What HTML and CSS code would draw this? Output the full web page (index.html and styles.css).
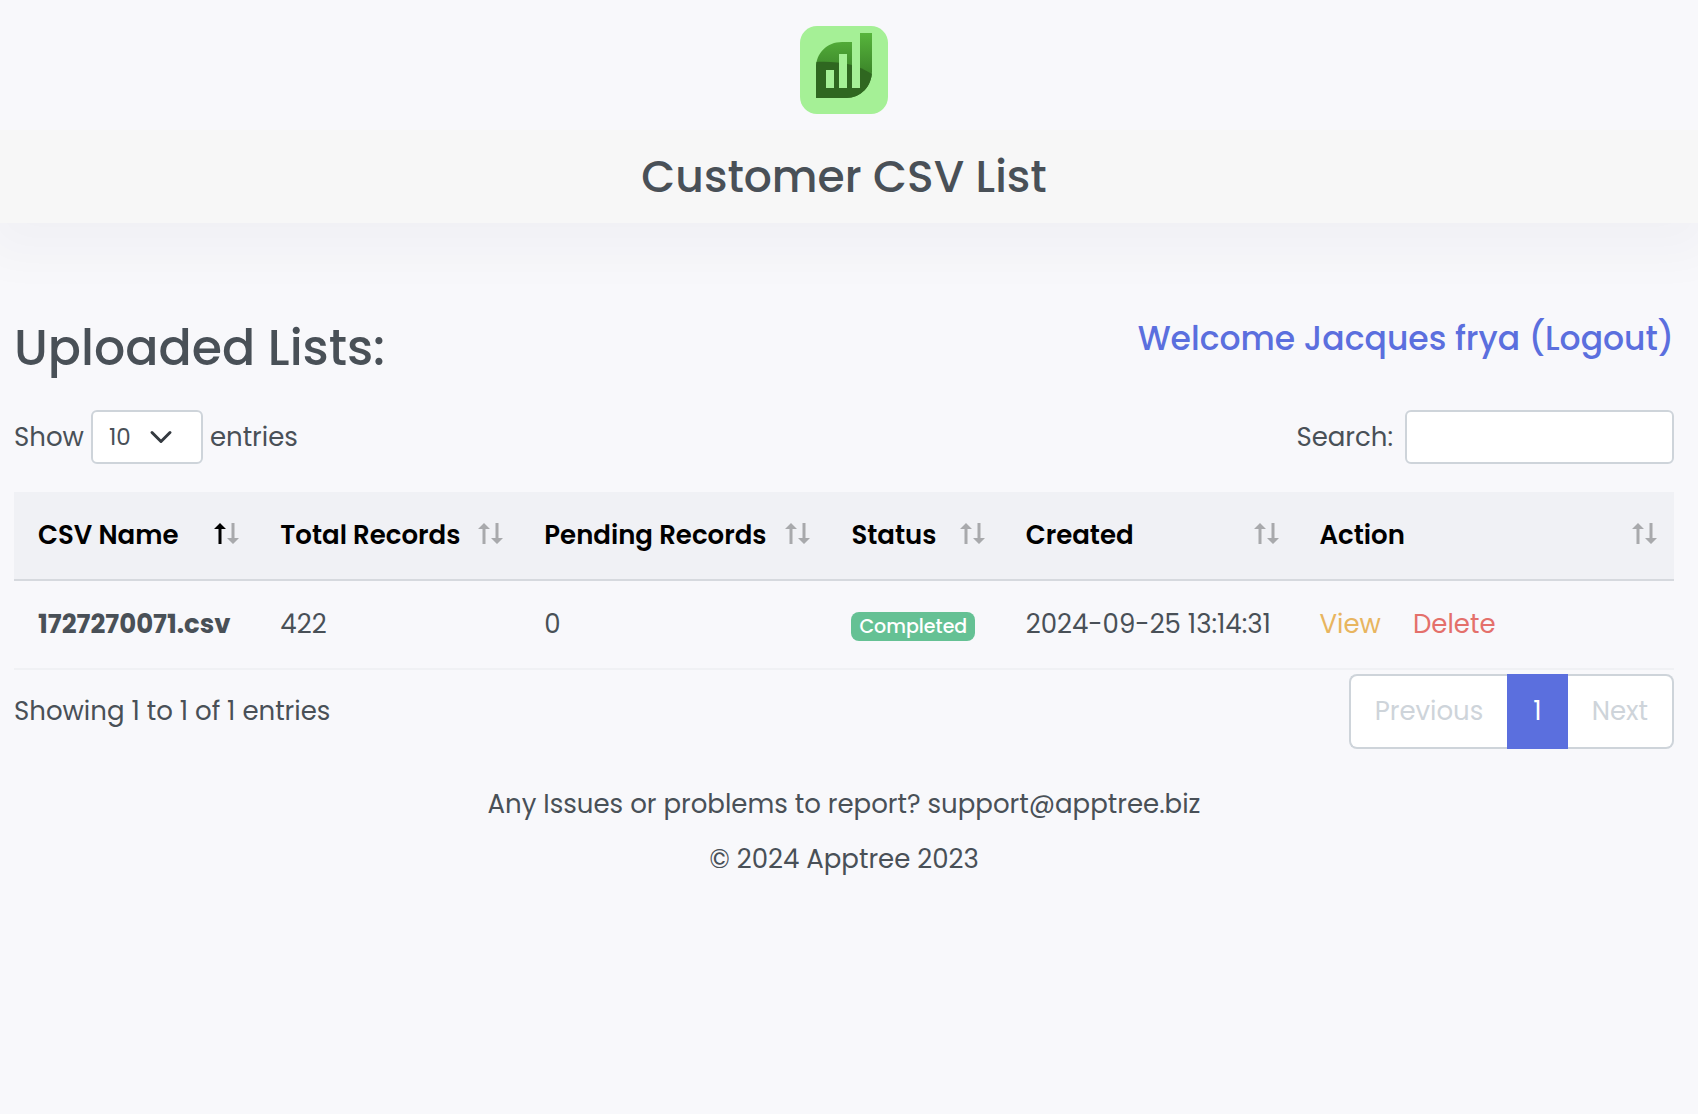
FILE: index.html
```html
<!DOCTYPE html>
<html lang="en">
<head>
  <meta charset="UTF-8">
  <meta name="viewport" content="width=device-width, initial-scale=1.0">
  <title>Customer CSV List</title>
  <link rel="stylesheet" href="styles.css">
</head>
<body>
  <svg class="sprite" aria-hidden="true">
    <symbol id="sort" viewBox="0 0 25 21">
      <path class="up" d="M4.500 21V6H0L6 0l6 6H7.500v15z"/>
      <path class="down" d="M17.500 0v15H13l6 6 6-6h-4.500V0z"/>
    </symbol>
  </svg>

  <header>
    <div class="logo">
      <svg width="88" height="88" viewBox="0 0 88 88" role="img" aria-label="Apptree">
        <defs>
          <linearGradient id="leaf" x1="0" y1="0" x2="0" y2="1">
            <stop offset="0" stop-color="#57b53c"/>
            <stop offset="0.7" stop-color="#387f27"/>
          </linearGradient>
          <clipPath id="shape">
            <path d="M16 72V42C16 27 27 16 42 16H52V62H60V7H72V45C72 60 61 72 46 72Z"/>
          </clipPath>
        </defs>
        <rect width="88" height="88" rx="17" fill="#a5f096"/>
        <g clip-path="url(#shape)">
          <rect x="16" y="7" width="56" height="65" fill="url(#leaf)"/>
          <path d="M16 36C38 35 56 38 72 48V72H16Z" fill="#2f6720"/>
        </g>
        <path d="M26 44h8v18h-8zM39 28h8v34h-8z" fill="#a5f096"/>
      </svg>
    </div>
    <h1>Customer CSV List</h1>
  </header>

  <main>
    <div class="row top">
      <h2>Uploaded Lists:</h2>
      <a class="logout" href="#">Welcome Jacques frya (Logout)</a>
    </div>

    <div class="row filters">
      <label class="length">Show
        <select>
          <option>10</option>
          <option>25</option>
          <option>50</option>
          <option>100</option>
        </select>
        entries
      </label>
      <label class="search">Search: <input type="search"></label>
    </div>

    <table>
      <colgroup>
        <col class="col-name">
        <col class="col-total">
        <col class="col-pending">
        <col class="col-status">
        <col class="col-created">
        <col class="col-action">
      </colgroup>
      <thead>
        <tr>
          <th class="asc"><button type="button">CSV Name <svg><use href="#sort"/></svg></button></th>
          <th><button type="button">Total Records <svg><use href="#sort"/></svg></button></th>
          <th><button type="button">Pending Records <svg><use href="#sort"/></svg></button></th>
          <th><button type="button">Status <svg><use href="#sort"/></svg></button></th>
          <th><button type="button">Created <svg><use href="#sort"/></svg></button></th>
          <th><button type="button">Action <svg><use href="#sort"/></svg></button></th>
        </tr>
      </thead>
      <tbody>
        <tr>
          <td><strong>1727270071.csv</strong></td>
          <td>422</td>
          <td>0</td>
          <td><span class="badge">Completed</span></td>
          <td>2024-09-25 13:14:31</td>
          <td><a class="view" href="#">View</a><a class="delete" href="#">Delete</a></td>
        </tr>
      </tbody>
    </table>

    <div class="row bottom">
      <div class="info">Showing 1 to 1 of 1 entries</div>
      <nav class="pagination">
        <button type="button" disabled>Previous</button>
        <button type="button" class="active">1</button>
        <button type="button" disabled>Next</button>
      </nav>
    </div>
  </main>

  <footer>
    <p>Any Issues or problems to report? support@apptree.biz</p>
    <p>© 2024 Apptree 2023</p>
  </footer>
</body>
</html>
```
FILE: styles.css
```css
* {
  box-sizing: border-box;
}
body {
  margin: 0;
  font-family: Poppins, Inter, sans-serif;
  font-size: 26px;
  line-height: 39px;
  color: #495057;
  background-color: #f8f8fb;
}
a {
  text-decoration: none;
}
button, select, input {
  font: inherit;
  color: inherit;
}
.sprite {
  display: block;
  width: 0;
  height: 0;
}

header {
  text-align: center;
  box-shadow: 0 16px 48px 16px rgba(18, 38, 63, 0.03);
  clip-path: inset(0 0 -100px 0);
}
.logo {
  display: flex;
  justify-content: center;
  padding: 26px 10px 16px 0;
  background-color: #f8f8fb;
}
h1 {
  margin: 0;
  padding: 20px 10px 19px 0;
  font-size: 44px;
  font-weight: 500;
  line-height: 54px;
  background-color: #f7f7f7;
}

main {
  padding: 0 24px 0 14px;
}
.row {
  display: flex;
  justify-content: space-between;
}
.top {
  padding-top: 94px;
}
h2 {
  margin: 0;
  font-size: 49px;
  font-weight: 500;
  line-height: 62px;
}
.logout {
  font-size: 33px;
  font-weight: 500;
  line-height: 44px;
  color: #5b6fde;
}
.filters {
  padding: 31px 0 28px;
}
.length, .search {
  display: flex;
  align-items: center;
  gap: 7px;
}
.search {
  gap: 12px;
}
select, input {
  height: 54px;
  border: 2px solid #ced4da;
  border-radius: 6px;
  background-color: #fff;
}
select {
  width: 112px;
  padding: 0 16px;
  font-size: 23px;
  appearance: none;
  background-image: url("data:image/svg+xml,%3Csvg xmlns='http://www.w3.org/2000/svg' viewBox='0 0 16 16'%3E%3Cpath fill='none' stroke='%23343a40' stroke-linecap='round' stroke-linejoin='round' stroke-width='2' d='M2 5l6 6 6-6'/%3E%3C/svg%3E");
  background-repeat: no-repeat;
  background-position: right 28px center;
  background-size: 24px;
}
input {
  width: 269px;
  padding: 0 16px;
}

table {
  width: 100%;
  table-layout: fixed;
  border-collapse: collapse;
}
.col-name { width: 14.6%; }
.col-total { width: 15.9%; }
.col-pending { width: 18.5%; }
.col-status { width: 10.5%; }
.col-created { width: 17.7%; }
.col-action { width: 22.8%; }
th {
  padding: 0;
  background-color: #f0f1f5;
  border-bottom: 2px solid #d6d9de;
}
th button {
  display: flex;
  justify-content: space-between;
  align-items: center;
  width: 100%;
  padding: 24px 17px 24px 24px;
  border: none;
  background: none;
  font-weight: 600;
  color: #000;
  white-space: nowrap;
}
th svg {
  flex: none;
  width: 25px;
  height: 21px;
  margin-bottom: 4px;
  fill: #a8a9ac;
}
.asc svg {
  --up: #000;
}
.up {
  fill: var(--up, #a8a9ac);
}
td {
  padding: 24px;
  border-bottom: 2px solid #f0f1f4;
  white-space: nowrap;
}
.badge {
  display: inline-block;
  padding: 0 8px;
  border-radius: 8px;
  font-size: 19px;
  font-weight: 500;
  line-height: 29px;
  color: #fff;
  background-color: #65c194;
}
.view {
  margin-right: 32px;
  color: #e8b55f;
}
.delete {
  color: #e4706b;
}

.bottom {
  padding-top: 4px;
}
.info {
  padding-top: 18px;
}
.pagination {
  display: flex;
}
.pagination button {
  padding: 16px 24px;
  border: 2px solid #ced4da;
  background-color: #fff;
  color: #ced4da;
}
.pagination button:first-child {
  border-right: none;
  border-radius: 8px 0 0 8px;
}
.pagination button:last-child {
  border-left: none;
  border-radius: 0 8px 8px 0;
}
.pagination .active {
  border-color: #5b6fde;
  background-color: #5b6fde;
  color: #fff;
}

footer {
  padding: 36px 10px 0 0;
  text-align: center;
}
footer p {
  margin: 0 0 16px;
}
```
